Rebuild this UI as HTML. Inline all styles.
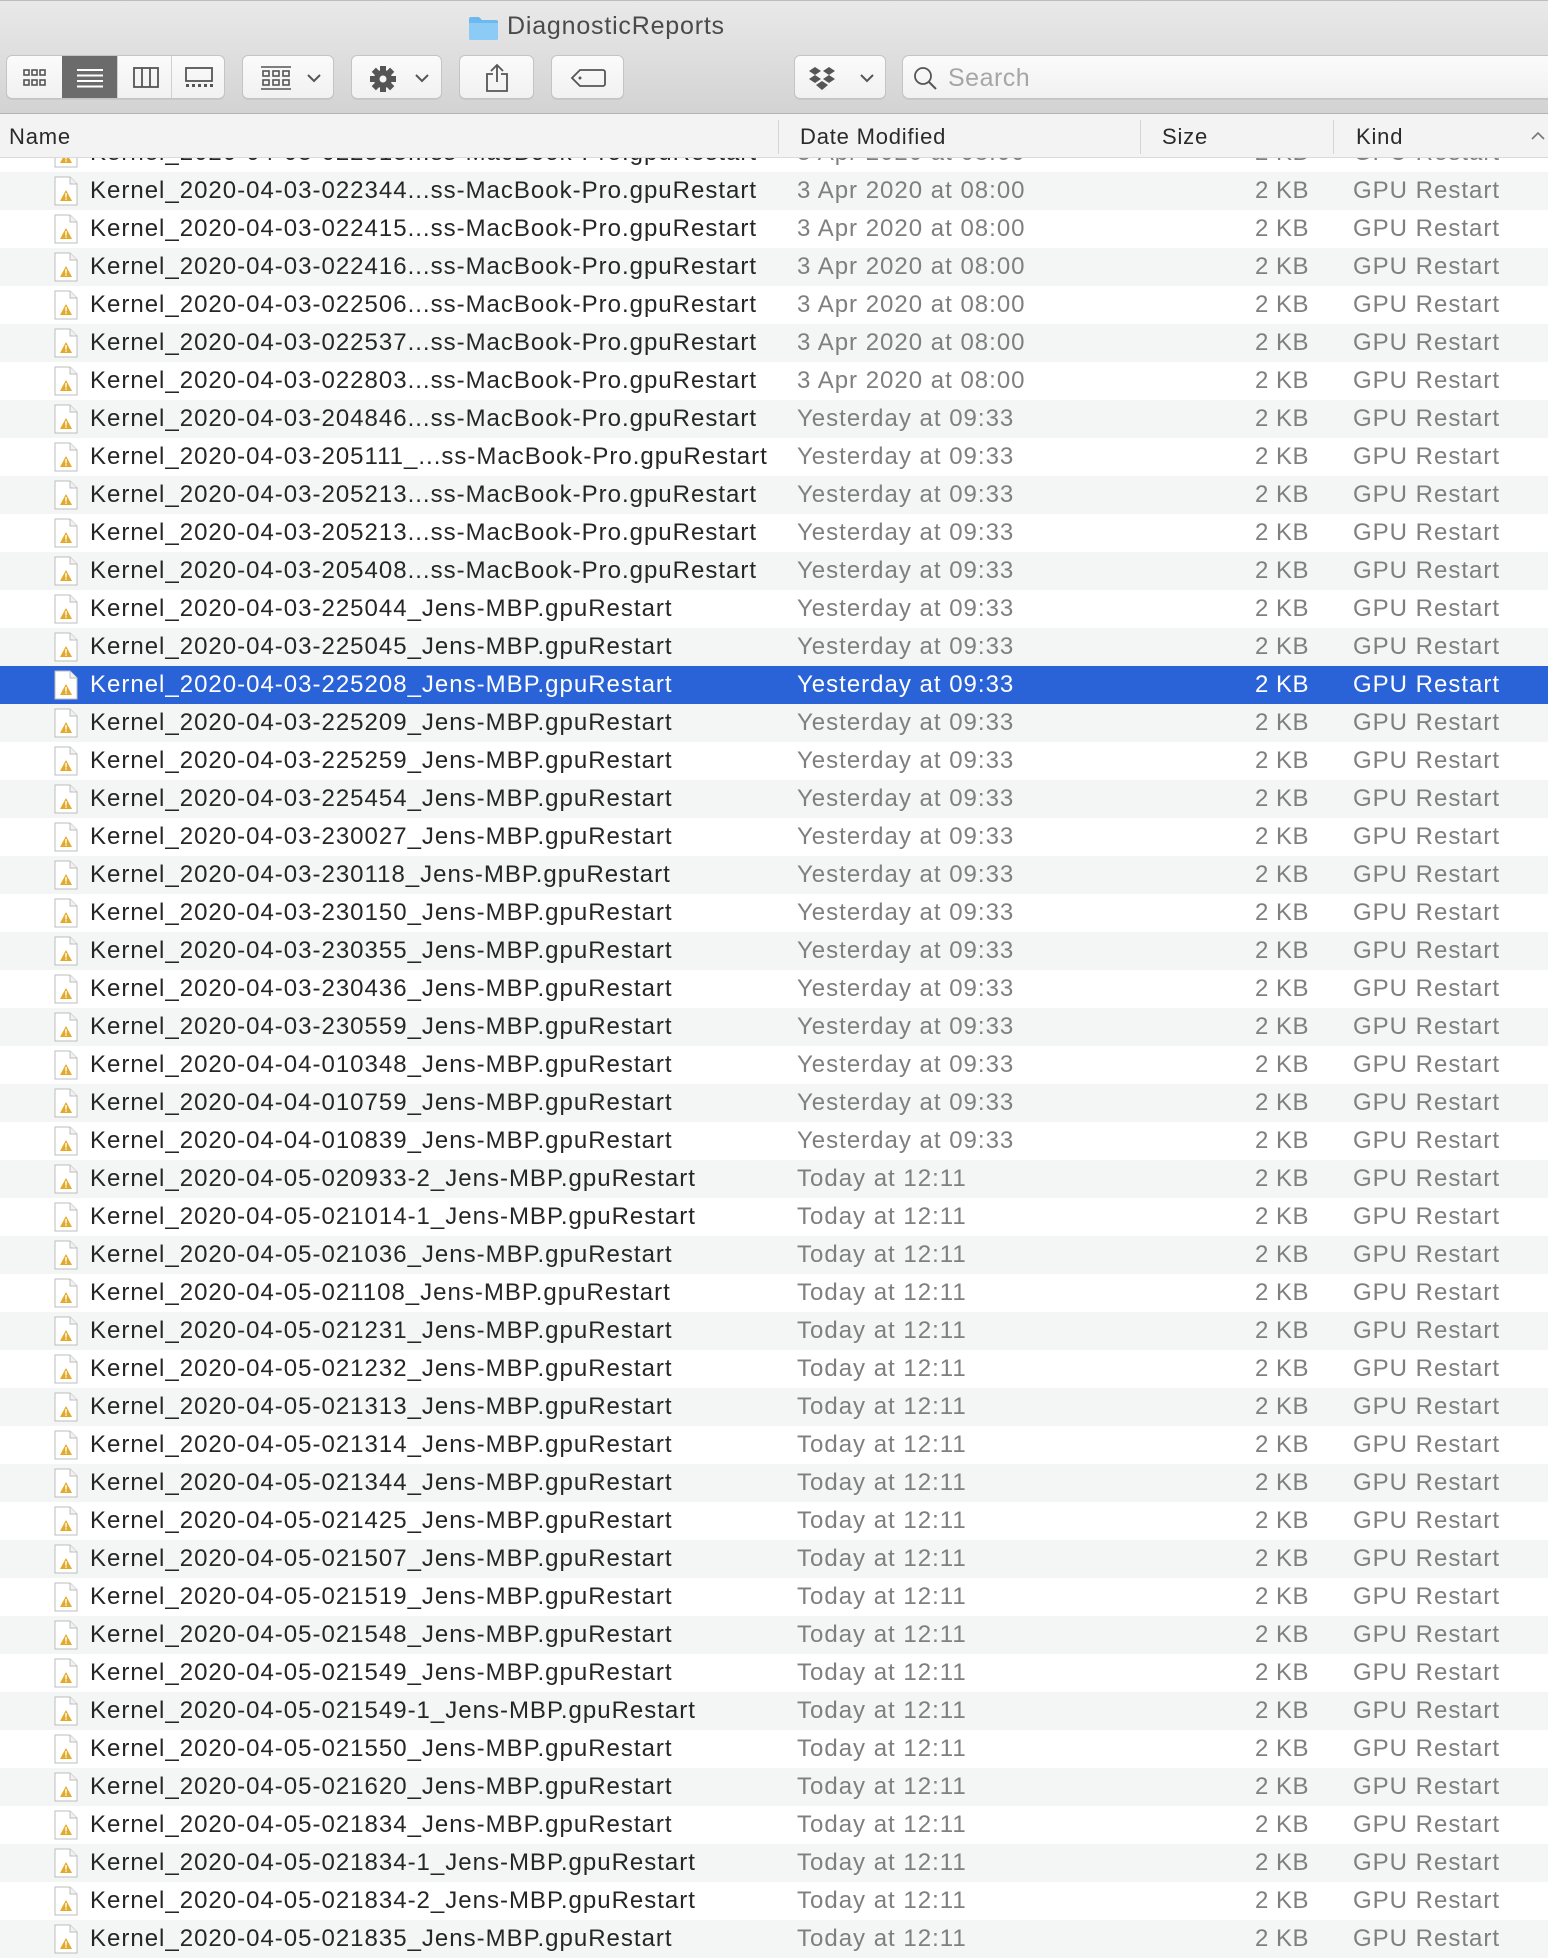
<!DOCTYPE html>
<html><head><meta charset="utf-8"><style>
*{margin:0;padding:0;box-sizing:border-box}
body{width:1548px;height:1924px;overflow:hidden;background:#fff;font-family:"Liberation Sans",sans-serif;position:relative}
#tb{position:absolute;left:0;top:0;width:1548px;height:114px;background:linear-gradient(#e9e9e9,#d3d3d3);border-top:1px solid #bdbdbd;border-bottom:1px solid #b4b4b4}
.title{position:absolute;top:11px;font-size:25px;letter-spacing:0.8px;color:#4a4a4a}
.btn{position:absolute;top:54px;height:44px;background:linear-gradient(#fbfbfb,#f1f1f1);border:1px solid #c4c4c4;border-radius:6px;box-shadow:0 1px 0 rgba(0,0,0,.06)}
#hd{position:absolute;left:0;top:114px;width:1548px;height:44px;background:#f3f3f3;border-bottom:1px solid #dadada;z-index:3;font-size:22px;letter-spacing:0.8px;color:#2a2a2a}
#hd span{position:absolute;top:10px}
.dv{position:absolute;top:6px;width:1px;height:34px;background:#d5d5d5}
#list{position:absolute;left:0;top:134px;width:1548px}
.r{position:relative;height:38px;font-size:24px;letter-spacing:1px;color:#262626}
.r:nth-child(even){background:#f4f5f5}
.r span{position:absolute;top:5px;white-space:nowrap}
.n{left:90px}
.d{left:797px;color:#7f7f7f}
.s{right:239px;color:#7f7f7f;letter-spacing:0.5px}
.k{left:1353px;color:#7f7f7f}
.r svg{position:absolute;left:54px;top:4px}
.r.sel{background:#2a62d8!important;color:#fff}
.r.sel span{color:#fff}
</style></head><body>
<svg width="0" height="0" style="position:absolute"><defs><symbol id="ic" viewBox="0 0 24 30"><path d="M1 1h15l7 7v21H1z" fill="#fff" stroke="#bdbdbd"/><path d="M16 1v7h7" fill="#f2f2f2" stroke="#bdbdbd"/><path d="M12 14l6 11H6z" fill="#e3a92a"/><rect x="11.3" y="17" width="1.4" height="4.5" fill="#fff"/><rect x="11.3" y="22.3" width="1.4" height="1.4" fill="#fff"/></symbol></defs></svg>
<div id="tb">
<svg style="position:absolute;left:468px;top:15px" width="31" height="24" viewBox="0 0 31 24"><path d="M1 3a2 2 0 0 1 2-2h8l3 3h14a2 2 0 0 1 2 2v16a2 2 0 0 1-2 2H3a2 2 0 0 1-2-2z" fill="#6cb8ef"/><path d="M1 7h29v15a2 2 0 0 1-2 2H3a2 2 0 0 1-2-2z" fill="#8ccbf5"/></svg>
<div class="title" style="left:507px">DiagnosticReports</div>
<div class="btn" style="left:6px;width:219px;overflow:hidden">
 <div style="position:absolute;left:55px;top:0;width:55px;height:44px;background:#6b6b6b"></div>
 <div style="position:absolute;left:110px;top:0;width:1px;height:44px;background:#d0d0d0"></div>
 <div style="position:absolute;left:164px;top:0;width:1px;height:44px;background:#d0d0d0"></div>
 <svg style="position:absolute;left:16px;top:12px" width="24" height="20"><g fill="none" stroke="#555" stroke-width="1.6"><rect x="1" y="2" width="5" height="5"/><rect x="9" y="2" width="5" height="5"/><rect x="17" y="2" width="5" height="5"/><rect x="1" y="12" width="5" height="5"/><rect x="9" y="12" width="5" height="5"/><rect x="17" y="12" width="5" height="5"/></g></svg>
 <svg style="position:absolute;left:70px;top:12px" width="26" height="20"><g stroke="#fff" stroke-width="2"><path d="M0 2h26M0 7.5h26M0 13h26M0 18.5h26"/></g></svg>
 <svg style="position:absolute;left:126px;top:11px" width="26" height="22"><g fill="none" stroke="#555" stroke-width="1.8"><rect x="1" y="1" width="24" height="19"/><path d="M9 1v19M17 1v19"/></g></svg>
 <svg style="position:absolute;left:178px;top:11px" width="28" height="22"><g fill="none" stroke="#555" stroke-width="1.8"><rect x="1" y="1" width="26" height="13"/></g><g fill="#555"><rect x="1" y="17" width="3" height="3"/><rect x="7" y="17" width="3" height="3"/><rect x="13" y="17" width="3" height="3"/><rect x="19" y="17" width="3" height="3"/><rect x="25" y="17" width="3" height="3"/></g></svg>
</div>
<div class="btn" style="left:242px;width:92px">
 <svg style="position:absolute;left:18px;top:10px" width="30" height="24"><g stroke="#555" stroke-width="1.6" fill="none"><path d="M0 1h30M0 23h30"/><rect x="2" y="5" width="6" height="5"/><rect x="12" y="5" width="6" height="5"/><rect x="22" y="5" width="6" height="5"/><rect x="2" y="14" width="6" height="5"/><rect x="12" y="14" width="6" height="5"/><rect x="22" y="14" width="6" height="5"/></g></svg>
 <svg style="position:absolute;left:64px;top:17px" width="14" height="10"><path d="M1 2l6 6 6-6" stroke="#555" stroke-width="2" fill="none"/></svg>
</div>
<div class="btn" style="left:351px;width:91px">
 <svg style="position:absolute;left:17px;top:9px" width="28" height="28" viewBox="-14 -14 28 28"><g fill="#555"><circle r="9"/><g id="t"><rect x="-3" y="-13" width="6" height="26"/></g><use href="#t" transform="rotate(45)"/><use href="#t" transform="rotate(90)"/><use href="#t" transform="rotate(135)"/></g><circle r="3.5" fill="#f6f6f6"/></svg>
 <svg style="position:absolute;left:63px;top:17px" width="14" height="10"><path d="M1 2l6 6 6-6" stroke="#555" stroke-width="2" fill="none"/></svg>
</div>
<div class="btn" style="left:459px;width:75px">
 <svg style="position:absolute;left:25px;top:7px" width="24" height="30"><g stroke="#555" stroke-width="1.8" fill="none"><path d="M8 11H2v17h20V11h-6"/><path d="M12 19V2M6 8l6-6 6 6"/></g></svg>
</div>
<div class="btn" style="left:551px;width:73px">
 <svg style="position:absolute;left:18px;top:12px" width="36" height="20"><path d="M10 2h23a2 2 0 0 1 2 2v12a2 2 0 0 1-2 2H10l-8-8z" stroke="#555" stroke-width="1.8" fill="none"/><circle cx="10" cy="10" r="1.5" fill="#555"/></svg>
</div>
<div class="btn" style="left:794px;width:92px">
 <svg style="position:absolute;left:12px;top:10px" width="30" height="26" viewBox="0 0 30 26"><g fill="#555"><path d="M8 1l6 4-6 4-6-4z"/><path d="M22 1l6 4-6 4-6-4z"/><path d="M8 9l6 4-6 4-6-4z"/><path d="M22 9l6 4-6 4-6-4z"/><path d="M15 15l6 4-6 5-6-5z"/></g></svg>
 <svg style="position:absolute;left:65px;top:17px" width="14" height="10"><path d="M1 2l6 6 6-6" stroke="#555" stroke-width="2" fill="none"/></svg>
</div>
<div class="btn" style="left:902px;width:660px;border-radius:7px">
 <svg style="position:absolute;left:10px;top:10px" width="26" height="26"><circle cx="10" cy="10" r="8" stroke="#555" stroke-width="1.8" fill="none"/><path d="M16 16l7 7" stroke="#555" stroke-width="2"/></svg>
 <span style="position:absolute;left:45px;top:8px;font-size:25px;letter-spacing:0.5px;color:#a6a6a6">Search</span>
</div>
</div>
<div id="hd">
<span style="left:9px">Name</span>
<div class="dv" style="left:778px"></div><span style="left:800px">Date Modified</span>
<div class="dv" style="left:1140px"></div><span style="left:1162px">Size</span>
<div class="dv" style="left:1333px"></div><span style="left:1356px">Kind</span>
<svg style="position:absolute;left:1531px;top:17px" width="14" height="10"><path d="M1 8l6-6 6 6" stroke="#777" stroke-width="1.6" fill="none"/></svg>
</div>
<div id="list">
<div class="r"><svg width="24" height="30"><use href="#ic"/></svg><span class="n">Kernel_2020-04-03-022313...ss-MacBook-Pro.gpuRestart</span><span class="d">3 Apr 2020 at 08:00</span><span class="s">2 KB</span><span class="k">GPU Restart</span></div>
<div class="r"><svg width="24" height="30"><use href="#ic"/></svg><span class="n">Kernel_2020-04-03-022344...ss-MacBook-Pro.gpuRestart</span><span class="d">3 Apr 2020 at 08:00</span><span class="s">2 KB</span><span class="k">GPU Restart</span></div>
<div class="r"><svg width="24" height="30"><use href="#ic"/></svg><span class="n">Kernel_2020-04-03-022415...ss-MacBook-Pro.gpuRestart</span><span class="d">3 Apr 2020 at 08:00</span><span class="s">2 KB</span><span class="k">GPU Restart</span></div>
<div class="r"><svg width="24" height="30"><use href="#ic"/></svg><span class="n">Kernel_2020-04-03-022416...ss-MacBook-Pro.gpuRestart</span><span class="d">3 Apr 2020 at 08:00</span><span class="s">2 KB</span><span class="k">GPU Restart</span></div>
<div class="r"><svg width="24" height="30"><use href="#ic"/></svg><span class="n">Kernel_2020-04-03-022506...ss-MacBook-Pro.gpuRestart</span><span class="d">3 Apr 2020 at 08:00</span><span class="s">2 KB</span><span class="k">GPU Restart</span></div>
<div class="r"><svg width="24" height="30"><use href="#ic"/></svg><span class="n">Kernel_2020-04-03-022537...ss-MacBook-Pro.gpuRestart</span><span class="d">3 Apr 2020 at 08:00</span><span class="s">2 KB</span><span class="k">GPU Restart</span></div>
<div class="r"><svg width="24" height="30"><use href="#ic"/></svg><span class="n">Kernel_2020-04-03-022803...ss-MacBook-Pro.gpuRestart</span><span class="d">3 Apr 2020 at 08:00</span><span class="s">2 KB</span><span class="k">GPU Restart</span></div>
<div class="r"><svg width="24" height="30"><use href="#ic"/></svg><span class="n">Kernel_2020-04-03-204846...ss-MacBook-Pro.gpuRestart</span><span class="d">Yesterday at 09:33</span><span class="s">2 KB</span><span class="k">GPU Restart</span></div>
<div class="r"><svg width="24" height="30"><use href="#ic"/></svg><span class="n">Kernel_2020-04-03-205111_...ss-MacBook-Pro.gpuRestart</span><span class="d">Yesterday at 09:33</span><span class="s">2 KB</span><span class="k">GPU Restart</span></div>
<div class="r"><svg width="24" height="30"><use href="#ic"/></svg><span class="n">Kernel_2020-04-03-205213...ss-MacBook-Pro.gpuRestart</span><span class="d">Yesterday at 09:33</span><span class="s">2 KB</span><span class="k">GPU Restart</span></div>
<div class="r"><svg width="24" height="30"><use href="#ic"/></svg><span class="n">Kernel_2020-04-03-205213...ss-MacBook-Pro.gpuRestart</span><span class="d">Yesterday at 09:33</span><span class="s">2 KB</span><span class="k">GPU Restart</span></div>
<div class="r"><svg width="24" height="30"><use href="#ic"/></svg><span class="n">Kernel_2020-04-03-205408...ss-MacBook-Pro.gpuRestart</span><span class="d">Yesterday at 09:33</span><span class="s">2 KB</span><span class="k">GPU Restart</span></div>
<div class="r"><svg width="24" height="30"><use href="#ic"/></svg><span class="n">Kernel_2020-04-03-225044_Jens-MBP.gpuRestart</span><span class="d">Yesterday at 09:33</span><span class="s">2 KB</span><span class="k">GPU Restart</span></div>
<div class="r"><svg width="24" height="30"><use href="#ic"/></svg><span class="n">Kernel_2020-04-03-225045_Jens-MBP.gpuRestart</span><span class="d">Yesterday at 09:33</span><span class="s">2 KB</span><span class="k">GPU Restart</span></div>
<div class="r sel"><svg width="24" height="30"><use href="#ic"/></svg><span class="n">Kernel_2020-04-03-225208_Jens-MBP.gpuRestart</span><span class="d">Yesterday at 09:33</span><span class="s">2 KB</span><span class="k">GPU Restart</span></div>
<div class="r"><svg width="24" height="30"><use href="#ic"/></svg><span class="n">Kernel_2020-04-03-225209_Jens-MBP.gpuRestart</span><span class="d">Yesterday at 09:33</span><span class="s">2 KB</span><span class="k">GPU Restart</span></div>
<div class="r"><svg width="24" height="30"><use href="#ic"/></svg><span class="n">Kernel_2020-04-03-225259_Jens-MBP.gpuRestart</span><span class="d">Yesterday at 09:33</span><span class="s">2 KB</span><span class="k">GPU Restart</span></div>
<div class="r"><svg width="24" height="30"><use href="#ic"/></svg><span class="n">Kernel_2020-04-03-225454_Jens-MBP.gpuRestart</span><span class="d">Yesterday at 09:33</span><span class="s">2 KB</span><span class="k">GPU Restart</span></div>
<div class="r"><svg width="24" height="30"><use href="#ic"/></svg><span class="n">Kernel_2020-04-03-230027_Jens-MBP.gpuRestart</span><span class="d">Yesterday at 09:33</span><span class="s">2 KB</span><span class="k">GPU Restart</span></div>
<div class="r"><svg width="24" height="30"><use href="#ic"/></svg><span class="n">Kernel_2020-04-03-230118_Jens-MBP.gpuRestart</span><span class="d">Yesterday at 09:33</span><span class="s">2 KB</span><span class="k">GPU Restart</span></div>
<div class="r"><svg width="24" height="30"><use href="#ic"/></svg><span class="n">Kernel_2020-04-03-230150_Jens-MBP.gpuRestart</span><span class="d">Yesterday at 09:33</span><span class="s">2 KB</span><span class="k">GPU Restart</span></div>
<div class="r"><svg width="24" height="30"><use href="#ic"/></svg><span class="n">Kernel_2020-04-03-230355_Jens-MBP.gpuRestart</span><span class="d">Yesterday at 09:33</span><span class="s">2 KB</span><span class="k">GPU Restart</span></div>
<div class="r"><svg width="24" height="30"><use href="#ic"/></svg><span class="n">Kernel_2020-04-03-230436_Jens-MBP.gpuRestart</span><span class="d">Yesterday at 09:33</span><span class="s">2 KB</span><span class="k">GPU Restart</span></div>
<div class="r"><svg width="24" height="30"><use href="#ic"/></svg><span class="n">Kernel_2020-04-03-230559_Jens-MBP.gpuRestart</span><span class="d">Yesterday at 09:33</span><span class="s">2 KB</span><span class="k">GPU Restart</span></div>
<div class="r"><svg width="24" height="30"><use href="#ic"/></svg><span class="n">Kernel_2020-04-04-010348_Jens-MBP.gpuRestart</span><span class="d">Yesterday at 09:33</span><span class="s">2 KB</span><span class="k">GPU Restart</span></div>
<div class="r"><svg width="24" height="30"><use href="#ic"/></svg><span class="n">Kernel_2020-04-04-010759_Jens-MBP.gpuRestart</span><span class="d">Yesterday at 09:33</span><span class="s">2 KB</span><span class="k">GPU Restart</span></div>
<div class="r"><svg width="24" height="30"><use href="#ic"/></svg><span class="n">Kernel_2020-04-04-010839_Jens-MBP.gpuRestart</span><span class="d">Yesterday at 09:33</span><span class="s">2 KB</span><span class="k">GPU Restart</span></div>
<div class="r"><svg width="24" height="30"><use href="#ic"/></svg><span class="n">Kernel_2020-04-05-020933-2_Jens-MBP.gpuRestart</span><span class="d">Today at 12:11</span><span class="s">2 KB</span><span class="k">GPU Restart</span></div>
<div class="r"><svg width="24" height="30"><use href="#ic"/></svg><span class="n">Kernel_2020-04-05-021014-1_Jens-MBP.gpuRestart</span><span class="d">Today at 12:11</span><span class="s">2 KB</span><span class="k">GPU Restart</span></div>
<div class="r"><svg width="24" height="30"><use href="#ic"/></svg><span class="n">Kernel_2020-04-05-021036_Jens-MBP.gpuRestart</span><span class="d">Today at 12:11</span><span class="s">2 KB</span><span class="k">GPU Restart</span></div>
<div class="r"><svg width="24" height="30"><use href="#ic"/></svg><span class="n">Kernel_2020-04-05-021108_Jens-MBP.gpuRestart</span><span class="d">Today at 12:11</span><span class="s">2 KB</span><span class="k">GPU Restart</span></div>
<div class="r"><svg width="24" height="30"><use href="#ic"/></svg><span class="n">Kernel_2020-04-05-021231_Jens-MBP.gpuRestart</span><span class="d">Today at 12:11</span><span class="s">2 KB</span><span class="k">GPU Restart</span></div>
<div class="r"><svg width="24" height="30"><use href="#ic"/></svg><span class="n">Kernel_2020-04-05-021232_Jens-MBP.gpuRestart</span><span class="d">Today at 12:11</span><span class="s">2 KB</span><span class="k">GPU Restart</span></div>
<div class="r"><svg width="24" height="30"><use href="#ic"/></svg><span class="n">Kernel_2020-04-05-021313_Jens-MBP.gpuRestart</span><span class="d">Today at 12:11</span><span class="s">2 KB</span><span class="k">GPU Restart</span></div>
<div class="r"><svg width="24" height="30"><use href="#ic"/></svg><span class="n">Kernel_2020-04-05-021314_Jens-MBP.gpuRestart</span><span class="d">Today at 12:11</span><span class="s">2 KB</span><span class="k">GPU Restart</span></div>
<div class="r"><svg width="24" height="30"><use href="#ic"/></svg><span class="n">Kernel_2020-04-05-021344_Jens-MBP.gpuRestart</span><span class="d">Today at 12:11</span><span class="s">2 KB</span><span class="k">GPU Restart</span></div>
<div class="r"><svg width="24" height="30"><use href="#ic"/></svg><span class="n">Kernel_2020-04-05-021425_Jens-MBP.gpuRestart</span><span class="d">Today at 12:11</span><span class="s">2 KB</span><span class="k">GPU Restart</span></div>
<div class="r"><svg width="24" height="30"><use href="#ic"/></svg><span class="n">Kernel_2020-04-05-021507_Jens-MBP.gpuRestart</span><span class="d">Today at 12:11</span><span class="s">2 KB</span><span class="k">GPU Restart</span></div>
<div class="r"><svg width="24" height="30"><use href="#ic"/></svg><span class="n">Kernel_2020-04-05-021519_Jens-MBP.gpuRestart</span><span class="d">Today at 12:11</span><span class="s">2 KB</span><span class="k">GPU Restart</span></div>
<div class="r"><svg width="24" height="30"><use href="#ic"/></svg><span class="n">Kernel_2020-04-05-021548_Jens-MBP.gpuRestart</span><span class="d">Today at 12:11</span><span class="s">2 KB</span><span class="k">GPU Restart</span></div>
<div class="r"><svg width="24" height="30"><use href="#ic"/></svg><span class="n">Kernel_2020-04-05-021549_Jens-MBP.gpuRestart</span><span class="d">Today at 12:11</span><span class="s">2 KB</span><span class="k">GPU Restart</span></div>
<div class="r"><svg width="24" height="30"><use href="#ic"/></svg><span class="n">Kernel_2020-04-05-021549-1_Jens-MBP.gpuRestart</span><span class="d">Today at 12:11</span><span class="s">2 KB</span><span class="k">GPU Restart</span></div>
<div class="r"><svg width="24" height="30"><use href="#ic"/></svg><span class="n">Kernel_2020-04-05-021550_Jens-MBP.gpuRestart</span><span class="d">Today at 12:11</span><span class="s">2 KB</span><span class="k">GPU Restart</span></div>
<div class="r"><svg width="24" height="30"><use href="#ic"/></svg><span class="n">Kernel_2020-04-05-021620_Jens-MBP.gpuRestart</span><span class="d">Today at 12:11</span><span class="s">2 KB</span><span class="k">GPU Restart</span></div>
<div class="r"><svg width="24" height="30"><use href="#ic"/></svg><span class="n">Kernel_2020-04-05-021834_Jens-MBP.gpuRestart</span><span class="d">Today at 12:11</span><span class="s">2 KB</span><span class="k">GPU Restart</span></div>
<div class="r"><svg width="24" height="30"><use href="#ic"/></svg><span class="n">Kernel_2020-04-05-021834-1_Jens-MBP.gpuRestart</span><span class="d">Today at 12:11</span><span class="s">2 KB</span><span class="k">GPU Restart</span></div>
<div class="r"><svg width="24" height="30"><use href="#ic"/></svg><span class="n">Kernel_2020-04-05-021834-2_Jens-MBP.gpuRestart</span><span class="d">Today at 12:11</span><span class="s">2 KB</span><span class="k">GPU Restart</span></div>
<div class="r"><svg width="24" height="30"><use href="#ic"/></svg><span class="n">Kernel_2020-04-05-021835_Jens-MBP.gpuRestart</span><span class="d">Today at 12:11</span><span class="s">2 KB</span><span class="k">GPU Restart</span></div>
</div>
</body></html>
